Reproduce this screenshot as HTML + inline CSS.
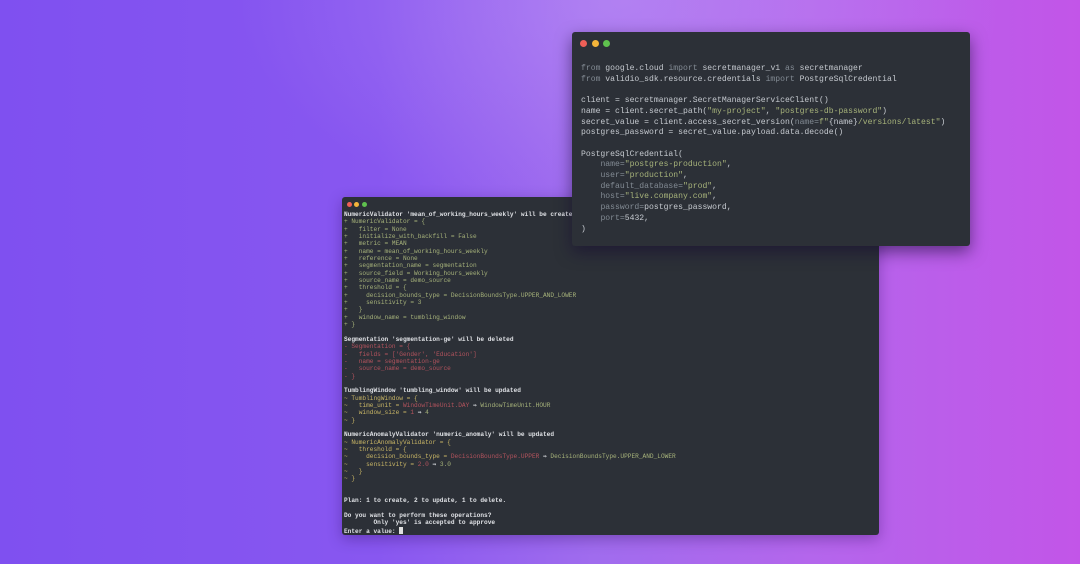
<!DOCTYPE html>
<html><head><meta charset="utf-8"><style>
*{margin:0;padding:0;box-sizing:border-box}
html,body{width:1080px;height:564px;overflow:hidden}
body{position:relative;background:linear-gradient(90deg,#7f50f0 0%,#8857f0 35%,#a06cee 55%,#b466ec 75%,#c255e8 100%);}
.glow{position:absolute;inset:0;background:radial-gradient(ellipse 380px 220px at 620px 0px,rgba(200,160,248,0.4),rgba(200,160,248,0) 100%);}
.win{position:absolute;background:#2c3037;border-radius:3px;}
.back{left:342px;top:197px;width:537px;height:338px;box-shadow:0 4px 14px rgba(40,10,90,.35)}
.front{left:572px;top:32px;width:398px;height:214px;box-shadow:0 6px 16px rgba(20,10,50,.55)}
.dot{position:absolute;border-radius:50%}
pre{position:absolute;font-family:"Liberation Mono",monospace;white-space:pre;}
.bp{left:2px;top:14px;font-size:6.15px;line-height:7.35px;color:#d8dadf}
.bp .w{font-weight:bold}
.fp{left:9px;top:32px;font-size:8.1px;line-height:10.7px;color:#c5c9cf}
.g{color:#a6b27a}.r{color:#b3535d}.k{color:#838b94}.w{color:#dfe1e5}.y{color:#c8b565}
.cur{display:inline-block;width:4px;height:7px;background:#e0e0e0;vertical-align:-1px}
</style></head><body>
<div class="glow"></div>
<div class="win back">
<div class="dot" style="left:5px;top:5px;width:5px;height:5px;background:#ee5f57"></div>
<div class="dot" style="left:12px;top:5px;width:5px;height:5px;background:#f3b43a"></div>
<div class="dot" style="left:20px;top:5px;width:5px;height:5px;background:#5fc14e"></div>
<pre class="bp"><span class="w">NumericValidator 'mean_of_working_hours_weekly' will be created</span>
<span class="g">+ NumericValidator = {
+   filter = None
+   initialize_with_backfill = False
+   metric = MEAN
+   name = mean_of_working_hours_weekly
+   reference = None
+   segmentation_name = segmentation
+   source_field = Working_hours_weekly
+   source_name = demo_source
+   threshold = {
+     decision_bounds_type = DecisionBoundsType.UPPER_AND_LOWER
+     sensitivity = 3
+   }
+   window_name = tumbling_window
+ }</span>

<span class="w">Segmentation 'segmentation-ge' will be deleted</span>
<span class="r">- Segmentation = {
-   fields = ['Gender', 'Education']
-   name = segmentation-ge
-   source_name = demo_source
- }</span>

<span class="w">TumblingWindow 'tumbling_window' will be updated</span>
<span class="y">~ TumblingWindow = {
~   time_unit = <span class="r">WindowTimeUnit.DAY</span> <span class="w">⇒</span> <span class="g">WindowTimeUnit.HOUR</span>
~   window_size = <span class="r">1</span> <span class="w">⇒</span> <span class="g">4</span>
~ }</span>

<span class="w">NumericAnomalyValidator 'numeric_anomaly' will be updated</span>
<span class="y">~ NumericAnomalyValidator = {
~   threshold = {
~     decision_bounds_type = <span class="r">DecisionBoundsType.UPPER</span> <span class="w">⇒</span> <span class="g">DecisionBoundsType.UPPER_AND_LOWER</span>
~     sensitivity = <span class="r">2.0</span> <span class="w">⇒</span> <span class="g">3.0</span>
~   }
~ }</span>


<span class="w">Plan: 1 to create, 2 to update, 1 to delete.

Do you want to perform these operations?
        Only 'yes' is accepted to approve
Enter a value: </span><span class="cur"></span></pre>
</div>
<div class="win front">
<div class="dot" style="left:8px;top:8px;width:7px;height:7px;background:#ee5f57"></div>
<div class="dot" style="left:20px;top:8px;width:7px;height:7px;background:#f3b43a"></div>
<div class="dot" style="left:31px;top:8px;width:7px;height:7px;background:#5fc14e"></div>
<pre class="fp"><span class="k">from</span> google.cloud <span class="k">import</span> secretmanager_v1 <span class="k">as</span> secretmanager
<span class="k">from</span> validio_sdk.resource.credentials <span class="k">import</span> PostgreSqlCredential

client = secretmanager.SecretManagerServiceClient()
name = client.secret_path(<span class="g">"my-project"</span>, <span class="g">"postgres-db-password"</span>)
secret_value = client.access_secret_version(<span class="k">name=</span><span class="g">f"</span>{name}<span class="g">/versions/latest"</span>)
postgres_password = secret_value.payload.data.decode()

PostgreSqlCredential(
    <span class="k">name=</span><span class="g">"postgres-production"</span>,
    <span class="k">user=</span><span class="g">"production"</span>,
    <span class="k">default_database=</span><span class="g">"prod"</span>,
    <span class="k">host=</span><span class="g">"live.company.com"</span>,
    <span class="k">password=</span>postgres_password,
    <span class="k">port=</span>5432,
)</pre>
</div>
</body></html>
